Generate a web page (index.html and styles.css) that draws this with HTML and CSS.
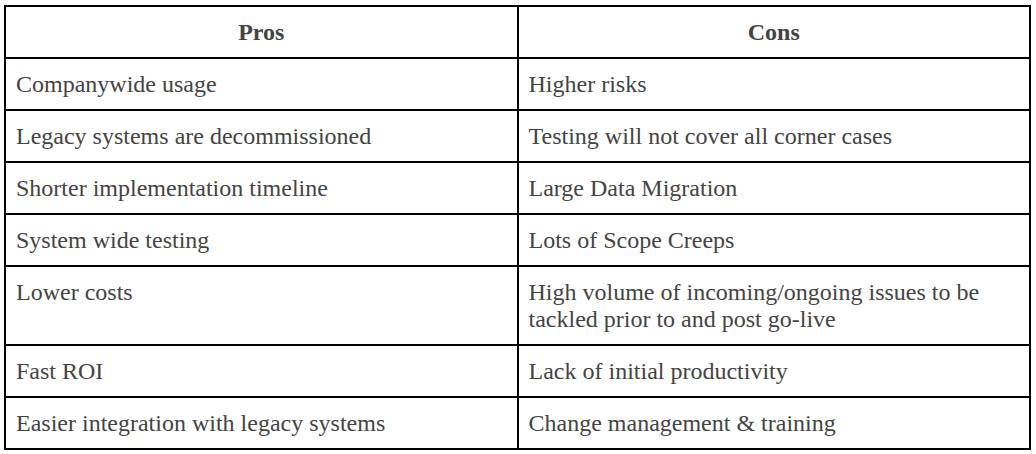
FILE: index.html
```html
<!DOCTYPE html>
<html>
<head>
<meta charset="utf-8">
<link rel="stylesheet" href="styles.css">
</head>
<body>
<table class="grid">
  <colgroup><col class="col"><col class="col"></colgroup>
  <thead>
    <tr><th>Pros</th><th>Cons</th></tr>
  </thead>
  <tbody>
    <tr><td>Companywide usage</td><td>Higher risks</td></tr>
    <tr><td>Legacy systems are decommissioned</td><td>Testing will not cover all corner cases</td></tr>
    <tr><td>Shorter implementation timeline</td><td>Large Data Migration</td></tr>
    <tr><td>System wide testing</td><td>Lots of Scope Creeps</td></tr>
    <tr><td>Lower costs</td><td>High volume of incoming/ongoing issues to be tackled prior to and post go-live</td></tr>
    <tr><td>Fast ROI</td><td>Lack of initial productivity</td></tr>
    <tr><td>Easier integration with legacy systems</td><td>Change management &amp; training</td></tr>
  </tbody>
</table>
</body>
</html>
```
FILE: styles.css
```css
html, body {
  margin: 0;
  padding: 0;
  background: #ffffff;
}
body {
  padding: 5px 0 0 4px;
}
.grid {
  border-collapse: collapse;
  table-layout: fixed;
  width: 1027px;
  font-family: "Liberation Serif", "Times New Roman", serif;
  font-size: 24px;
  line-height: 27px;
  color: #444444;
}
.col {
  width: 50%;
}
.grid th,
.grid td {
  border: 2px solid #000;
  padding: 12px 10px 11px 10px;
  text-align: left;
  vertical-align: top;
}
.grid th {
  text-align: center;
  font-weight: bold;
}
```
